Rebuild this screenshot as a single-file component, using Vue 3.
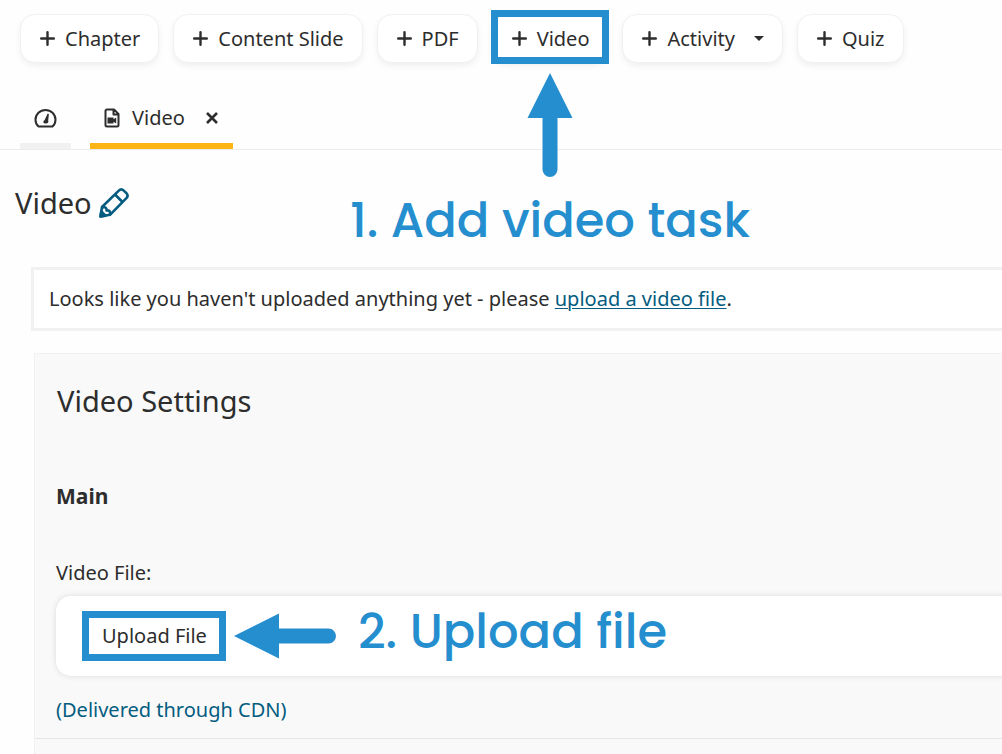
<template>
  <main class="editor">
    <nav class="toolbar" aria-label="Add task">
      <div v-for="item in items" :key="item.name" class="tool">
        <button type="button" class="tool-btn">
          <svg class="plus" viewBox="0 0 15 15" aria-hidden="true">
            <path d="M7.500 1.200v12.600M1.200 7.500h12.600" />
          </svg>
          <span>{{ item.name }}</span>
          <svg v-if="item.menu" class="caret" viewBox="0 0 10 5" aria-hidden="true">
            <path d="M0 0h10L5 5z" />
          </svg>
        </button>
        <div v-if="item.step" class="tool-callout">
          <div class="tool-frame"></div>
          <svg class="arrow-up" viewBox="0 0 46 104" aria-hidden="true">
            <path d="M23 0l22.500 45H30.500v51.500a7.500 7.500 0 0 1-15 0V45H.5z" />
          </svg>
          <span class="step">{{ item.step }}</span>
        </div>
      </div>
    </nav>

    <div class="tabs">
      <button type="button" class="tab" aria-label="Dashboard">
        <svg class="gauge" viewBox="0 0 22 19" aria-hidden="true">
          <path class="line" d="M4 17.500C2 15.800 1 13.400 1 10.800 1 5.300 5.500 1 11 1s10 4.300 10 9.800c0 2.600-1 5-3 6.700z" />
          <path class="needle" d="M13.200 4.500l1.200.4-.7 6.600c.6 1.800-.2 3-2.400 3-2.600 0-3.400-1.800-1.200-3.500z" />
        </svg>
      </button>
      <div class="tab active">
        <button type="button" class="tab-name">
          <svg class="file" viewBox="0 0 16 20" aria-hidden="true">
            <path class="line" d="M3 1.500h7l4.500 4.500v11a1.500 1.500 0 0 1-1.500 1.500H3A1.500 1.500 0 0 1 1.500 17V3A1.500 1.500 0 0 1 3 1.500zM9.500 1.500V6.500h5" />
            <path d="M3.500 9.500h6v1.700l2.700-1.700v6l-2.700-1.700v1.700h-6z" />
          </svg>
          <span>Video</span>
        </button>
        <button type="button" class="close" aria-label="Close Video">
          <svg viewBox="0 0 14 14" aria-hidden="true"><path d="M2 2l10 10M12 2L2 12" /></svg>
        </button>
      </div>
    </div>

    <header class="title">
      <h1>Video</h1>
      <button type="button" class="edit" aria-label="Edit title">
        <svg viewBox="0 0 30 30" aria-hidden="true">
          <path d="M1.500 28.500l1.500-9.500L19.800 2.600c1.600-1.500 3.400-1.500 5 0l2.600 2.600c1.500 1.600 1.500 3.400 0 5L11 26.800z" />
          <path d="M16 6.500l7.500 7.500M3.500 19.500c3-.8 4.500.3 4 3 2.800-.5 4 1 3.500 4" />
          <path class="tip" d="M1.500 28.500l.8-5 4.200 4.200z" />
        </svg>
      </button>
    </header>

    <p class="notice">
      Looks like you haven't uploaded anything yet - please <a href="#video-file">upload a video file</a>.
    </p>

    <section class="settings">
      <h2>Video Settings</h2>
      <h3>Main</h3>
      <label for="video-file">Video File:</label>
      <div class="upload">
        <button id="video-file" type="button" class="upload-btn">Upload File</button>
        <svg class="arrow-left" viewBox="0 0 102 46" aria-hidden="true">
          <path d="M0 23L45 .5v15h49.500a7.500 7.500 0 0 1 0 15H45v15z" />
        </svg>
        <span class="step">2. Upload file</span>
      </div>
      <p class="delivery">(Delivered through CDN)</p>
    </section>
  </main>
</template>

<script setup>
const items = [
  { name: 'Chapter' },
  { name: 'Content Slide' },
  { name: 'PDF' },
  { name: 'Video', step: '1. Add video task' },
  { name: 'Activity', menu: true },
  { name: 'Quiz' }
]
</script>

<style>
body {
  background: #fefefe;
  overflow-x: hidden;
}
</style>

<style scoped>
.editor {
  display: flex;
  flex-direction: column;
  min-height: 100vh;
  box-sizing: border-box;
  padding-top: 14px;
  overflow: hidden;
  color: #2d2d2d;
  font-family: "Noto Sans", sans-serif;
  font-size: 20px;
  line-height: 28px;
}

button {
  padding: 0;
  border: none;
  background: none;
  color: inherit;
  font: inherit;
  cursor: pointer;
}

svg {
  display: block;
  flex-shrink: 0;
}

h1,
h2,
h3,
p {
  margin: 0;
}

.toolbar {
  display: flex;
  gap: 14px;
  padding: 0 20px;
}

.tool {
  position: relative;
}

.tool-btn {
  display: flex;
  align-items: center;
  gap: 10px;
  height: 49px;
  padding: 0 18px 0 19px;
  border: 1px solid #f1f1f1;
  border-radius: 15px;
  background: #fff;
  box-shadow: 0 3px 6px rgba(0, 0, 0, 0.06);
  white-space: nowrap;
}

.plus {
  width: 15px;
  height: 15px;
  fill: none;
  stroke: #2d2d2d;
  stroke-width: 2.4;
  stroke-linecap: round;
}

.caret {
  width: 10px;
  height: 5px;
  margin-left: 9px;
}

.tool-callout {
  position: absolute;
  z-index: 1;
  top: -4px;
  left: -1px;
  right: -1px;
  display: flex;
  flex-direction: column;
  align-items: center;
  pointer-events: none;
}

.tool-frame {
  box-sizing: border-box;
  width: 100%;
  height: 54px;
  border: 7px solid #258ece;
}

.arrow-up {
  width: 46px;
  height: 104px;
  margin-top: 9px;
  fill: #258ece;
}

.step {
  color: #258ece;
  font-family: Poppins, Inter, sans-serif;
  font-size: 48px;
  font-weight: 500;
  line-height: 60px;
  white-space: nowrap;
}

.tool-callout .step {
  margin-top: 14px;
}

.tabs {
  display: flex;
  gap: 19px;
  height: 62px;
  margin-top: 24px;
  padding: 0 20px;
  border-bottom: 1px solid #ececec;
}

.tab {
  display: flex;
  align-items: center;
  padding: 6px 14px 0;
  border-bottom: 6px solid #f1f1f1;
}

.tab.active {
  gap: 20px;
  border-color: #fdb515;
}

.tab-name {
  display: flex;
  align-items: center;
  gap: 12px;
}

.gauge {
  width: 23px;
  height: 19px;
}

.file {
  width: 16px;
  height: 20px;
}

.gauge,
.file,
.caret {
  fill: #2d2d2d;
}

.line {
  fill: none;
  stroke: #2d2d2d;
  stroke-width: 2;
  stroke-linecap: round;
  stroke-linejoin: round;
}

.close svg {
  width: 14px;
  height: 14px;
  fill: none;
  stroke: #2d2d2d;
  stroke-width: 2.6;
}

.title {
  display: flex;
  align-items: center;
  gap: 7px;
  padding: 33px 15px 0;
}

h1,
h2 {
  font-size: 29px;
  font-weight: 400;
  line-height: 40px;
}

.edit svg {
  width: 30px;
  height: 30px;
  fill: none;
  stroke: #045c80;
  stroke-width: 2.6;
  stroke-linejoin: round;
}

.edit .tip {
  fill: #045c80;
}

.notice {
  margin: 44px -4px 0 31px;
  padding: 15px;
  border: 3px solid #f1f1f1;
  background: #fff;
}

.notice a {
  color: #045c80;
  text-underline-offset: 2px;
  text-decoration-thickness: 1px;
}

.settings {
  flex: 1;
  margin: 22px -1px 0 34px;
  border: 1px solid #f1f1f1;
  border-bottom: none;
  background: #f9f9f9;
}

h2 {
  padding: 27px 22px 0;
}

h3 {
  margin-top: 61px;
  padding: 0 21px;
  font-size: 21px;
  font-weight: 700;
}

label {
  display: block;
  margin-top: 49px;
  padding: 0 21px;
}

.upload {
  display: flex;
  align-items: center;
  height: 80px;
  margin: 9px -16px 0 21px;
  padding-left: 26px;
  border-radius: 15px;
  background: #fff;
  box-shadow: 0 0 6px rgba(0, 0, 0, 0.12);
}

.upload-btn {
  height: 50px;
  padding: 0 12px 0 13px;
  border: 7px solid #258ece;
  white-space: nowrap;
}

.arrow-left {
  width: 102px;
  height: 46px;
  margin: 0 22px 0 8px;
  fill: #258ece;
}

.upload .step {
  padding-bottom: 8px;
}

.delivery {
  margin-top: 20px;
  padding: 0 21px 14px;
  border-bottom: 1px solid #e6e6e6;
  color: #045c80;
}
</style>
